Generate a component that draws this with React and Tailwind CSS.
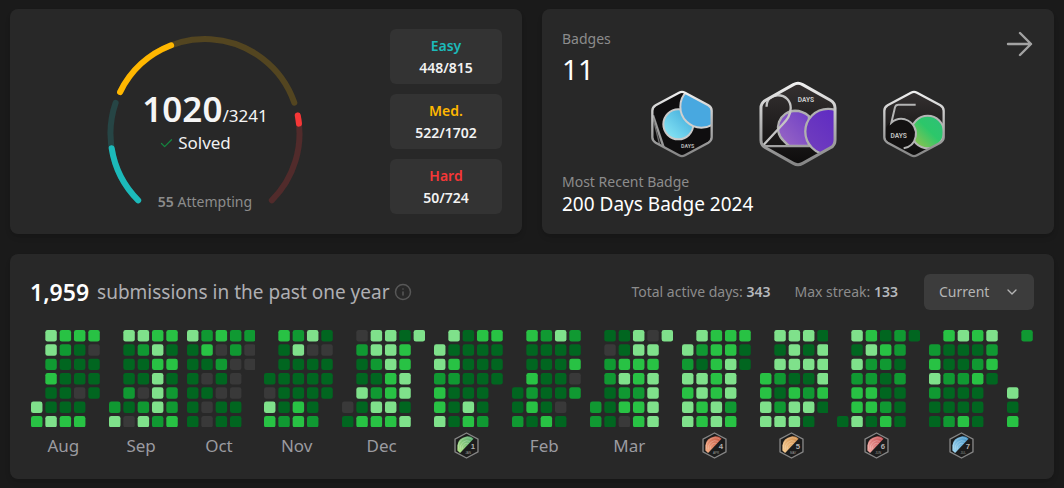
import React, { useId } from 'react';
import { Check, ChevronDown, Info } from 'lucide-react';

const LEVELS = ['#393939', '#016620', '#109932', '#28c244', '#7fe18b'];

// One string per weekday, one character per week. A dot is a day outside the month.
const MONTHS = [
  { label: 'Aug', rows: ['.4333', '.4210', '.2111', '.3111', '.1101', '4111.', '3433.'] },
  { label: 'Sep', rows: ['.4433', '.1241', '.1133', '.1141', '.2042', '21242', '40423'] },
  { label: 'Oct', rows: ['42322', '13020', '11200', '1010.', '1100.', '1011.', '1011.'] },
  { label: 'Nov', rows: ['.3241', '.1400', '.1111', '11111', '01111', '4131.', '3232.'] },
  { label: 'Dec', rows: ['.04414', '.2443.', '.1243.', '.1134.', '.4234.', '01441.', '13334.'] },
  { label: 'Jan', badge: { number: 1, from: '#b9e88a', to: '#4fa66a' }, rows: ['.4133', '41111', '43111', '22111', '3111.', '3141.', '4132.'] },
  { label: 'Feb', rows: ['.3242', '.1111', '.1113', '.3110', '12112', '1310.', '2131.'] },
  { label: 'Mar', rows: ['.11404', '.0144.', '.2333.', '.2434.', '.1224.', '21334.', '21034.'] },
  { label: 'Apr', badge: { number: 4, from: '#f7b48a', to: '#c4503c' }, rows: ['.4333', '42331', '21341', '4434.', '3434.', '4342.', '4343.'] },
  { label: 'May', badge: { number: 5, from: '#f9cf95', to: '#d08a45' }, rows: ['.4441', '.1414', '.4444', '32114', '31323', '42441', '4441.'] },
  { label: 'Jun', badge: { number: 6, from: '#f5b0a8', to: '#c2494d' }, rows: ['.43121', '.1432.', '.4221.', '.2212.', '.3311.', '.3321.', '14131.'] },
  { label: 'Jul', badge: { number: 7, from: '#a5dcf5', to: '#3d8fc4' }, rows: ['.3434', '21112', '31123', '42231', '2111.', '1111.', '1231.'] },
  { label: '', rows: ['.2', '..', '..', '..', '4.', '1.', '3.'] },
];

const DIFFICULTIES = [
  { name: 'Easy', solved: 448, total: 815, color: 'text-[#1cbaba]' },
  { name: 'Med.', solved: 522, total: 1702, color: 'text-[#ffb700]' },
  { name: 'Hard', solved: 50, total: 724, color: 'text-[#f63737]' },
];

// Angles are in degrees clockwise from the top.
const ARCS = [
  { from: -135, to: -71, color: '#264545' },
  { from: -135, to: -99, color: '#1cbaba' },
  { from: -64, to: 71, color: '#534520' },
  { from: -64, to: -21, color: '#ffb700' },
  { from: 79, to: 135, color: '#512b2b' },
  { from: 79, to: 84, color: '#f63737' },
];

const arcPath = (from, to) => {
  const point = (deg) => {
    const rad = (deg * Math.PI) / 180;
    return `${100 + 94.5 * Math.sin(rad)} ${104.5 - 94.5 * Math.cos(rad)}`;
  };
  return `M${point(from)} A94.5 94.5 0 ${to - from > 180 ? 1 : 0} 1 ${point(to)}`;
};

const SMALL_HEX =
  'M84 8 Q93 3 102 8 L172 46 Q182 52 182 62 V142 Q182 152 172 158 L102 196 Q93 201 84 196 L14 158 Q4 152 4 142 V62 Q4 52 14 46 Z';
const LARGE_HEX =
  'M103 11 Q117 3 131 11 L215 58 Q229 66 229 82 V178 Q229 194 215 202 L131 249 Q117 257 103 249 L19 202 Q5 194 5 178 V82 Q5 66 19 58 Z';

const BadgeDefs = ({ id, hex }) => (
  <defs>
    <linearGradient id={`${id}-rim`} x1="0" y1="0" x2="0" y2="1">
      <stop offset="0" stopColor="#f0f0f0" />
      <stop offset="0.5" stopColor="#b4b4b4" />
      <stop offset="1" stopColor="#858585" />
    </linearGradient>
    <linearGradient id={`${id}-body`} x1="0" y1="0" x2="0" y2="1">
      <stop offset="0" stopColor="#353131" />
      <stop offset="1" stopColor="#0d0c0c" />
    </linearGradient>
    <clipPath id={`${id}-clip`}>
      <path d={hex} />
    </clipPath>
  </defs>
);

const HundredDaysBadge = () => {
  const id = useId();
  return (
    <svg viewBox="0 0 186 204" className="w-[62px] h-[68px]" role="img" aria-label="100 Days Badge">
      <BadgeDefs id={id} hex={SMALL_HEX} />
      <linearGradient id={`${id}-a`} x1="0" y1="1" x2="1" y2="0">
        <stop offset="0" stopColor="#8fecf8" />
        <stop offset="1" stopColor="#3aa5d8" />
      </linearGradient>
      <path d={SMALL_HEX} fill="#0f0e0f" />
      <g clipPath={`url(#${id}-clip)`}>
        <path d="M6 76 L42 184 L26 174 Z" fill="#1d1b1c" />
        <path d="M6 76 L42 184" stroke="#9a9a9a" strokeWidth="7" />
        <path d="M6 84 L28 172" stroke="#6d6d6d" strokeWidth="4" />
        <circle cx="82" cy="103" r="45" fill={`url(#${id}-a)`} stroke="#c9c9c9" strokeWidth="6" />
        <circle cx="151" cy="50" r="63" fill="#48a8e0" stroke="#cfcfcf" strokeWidth="6" />
      </g>
      <path d={SMALL_HEX} fill="none" stroke={`url(#${id}-rim)`} strokeWidth="7" />
      <text x="110" y="173" textAnchor="middle" fontSize="16" fontWeight="700" fontFamily="Roboto, 'Liberation Sans', sans-serif" fill="#b5b5b5">DAYS</text>
    </svg>
  );
};

const TwoHundredDaysBadge = () => {
  const id = useId();
  return (
    <svg viewBox="0 0 234 260" className="w-[78px] h-[86px]" role="img" aria-label="200 Days Badge 2024">
      <BadgeDefs id={id} hex={LARGE_HEX} />
      <linearGradient id={`${id}-a`} x1="0" y1="1" x2="1" y2="0">
        <stop offset="0" stopColor="#9a68c4" />
        <stop offset="1" stopColor="#6f3fc6" />
      </linearGradient>
      <linearGradient id={`${id}-b`} x1="0" y1="1" x2="1" y2="0">
        <stop offset="0" stopColor="#7340bd" />
        <stop offset="1" stopColor="#5a26c4" />
      </linearGradient>
      <path d={LARGE_HEX} fill={`url(#${id}-body)`} />
      <g clipPath={`url(#${id}-clip)`} fill="none" strokeWidth="7">
        <path d="M108 90 A52 52 0 0 0 74 181 Q82 190 90 196 H150 V106 Q130 90 108 90 Z" fill={`url(#${id}-a)`} stroke="#b0b0b0" />
        <path d="M22 78 C22 56 36 43 56 43 C80 43 95 60 95 82 C95 104 84 116 68 134 L12 194" stroke="#c4c4c4" />
        <path d="M10 197 H160" stroke="#a0a0a0" />
        <circle cx="208" cy="153" r="69" fill={`url(#${id}-b)`} stroke="#b0b0b0" />
      </g>
      <path d={LARGE_HEX} fill="none" stroke={`url(#${id}-rim)`} strokeWidth="9" />
      <text x="141" y="63" textAnchor="middle" fontSize="20" fontWeight="700" fontFamily="Roboto, 'Liberation Sans', sans-serif" fill="#c9c9c9">DAYS</text>
    </svg>
  );
};

const FiftyDaysBadge = () => {
  const id = useId();
  return (
    <svg viewBox="0 0 186 204" className="w-[62px] h-[68px]" role="img" aria-label="50 Days Badge">
      <BadgeDefs id={id} hex={SMALL_HEX} />
      <linearGradient id={`${id}-a`} x1="0" y1="1" x2="1" y2="0">
        <stop offset="0.1" stopColor="#8fc34f" />
        <stop offset="0.55" stopColor="#2cc76a" />
        <stop offset="1" stopColor="#2fbf78" />
      </linearGradient>
      <path d={SMALL_HEX} fill={`url(#${id}-body)`} />
      <g clipPath={`url(#${id}-clip)`}>
        <circle cx="134" cy="126" r="49" fill={`url(#${id}-a)`} stroke="#b5b5b5" strokeWidth="6" />
        <circle cx="52" cy="133" r="47" fill="#131111" />
        <path d="M98 44 H46 Q38 44 36 52 L25 98 Q44 82 66 88 C92 96 102 120 98 140 Q92 170 62 175" fill="none" stroke="#b4b4b4" strokeWidth="6" />
      </g>
      <path d={SMALL_HEX} fill="none" stroke={`url(#${id}-rim)`} strokeWidth="7" />
      <text x="47" y="143" textAnchor="middle" fontSize="20" fontWeight="700" fontFamily="Roboto, 'Liberation Sans', sans-serif" fill="#bdbdbd">DAYS</text>
    </svg>
  );
};

const MonthBadge = ({ number, from, to, label }) => {
  const id = useId();
  return (
    <svg viewBox="0 0 74 80" className="w-[25px] h-[27px]" role="img" aria-label={`${label} badge`}>
      <linearGradient id={id} x1="0" y1="1" x2="1" y2="0">
        <stop offset="0" stopColor={from} />
        <stop offset="1" stopColor={to} />
      </linearGradient>
      <path d="M37 3 L71 21 V59 L37 77 L3 59 V21 Z" fill="#1c1c1c" stroke="#858585" strokeWidth="4" strokeLinejoin="round" />
      <path d="M58 20 L18 62 L10 55 V40 Q12 18 37 13 Q50 12 58 20 Z" fill={`url(#${id})`} />
      <g fill="none" stroke="#ffffff" strokeOpacity="0.35" strokeWidth="2">
        <path d="M14 50 A26 26 0 0 1 54 22" />
        <path d="M20 52 A20 20 0 0 1 48 28" />
        <path d="M25 50 A14 14 0 0 1 43 34" />
      </g>
      <text x="56" y="49" textAnchor="middle" fontSize="23" fontWeight="700" fontFamily="'Liberation Sans', sans-serif" fill="#b0b0b0">{number}</text>
      <text x="42" y="65" textAnchor="middle" fontSize="9" fontFamily="'Liberation Sans', sans-serif" fill="#9a9a9a">{label.toUpperCase()}</text>
    </svg>
  );
};

const Month = ({ month }) => {
  const weeks = month.rows[0].length;
  const width = weeks * 5 - 1;
  return (
    <div className="flex flex-col min-w-0 basis-0" style={{ flexGrow: width }}>
      <svg viewBox={`0 0 ${width} 34`} className="w-full block">
        {month.rows.map((row, y) =>
          row.split('').map((level, x) =>
            level === '.' ? null : (
              <rect key={`${x}-${y}`} x={x * 5} y={y * 5} width="4" height="4" rx="0.8" fill={LEVELS[level]} />
            )
          )
        )}
      </svg>
      <div className="mt-1 pr-1 h-7 flex items-center justify-center text-[17px] text-[#9b9ba0]">
        {month.badge ? <MonthBadge {...month.badge} label={month.label} /> : month.label}
      </div>
    </div>
  );
};

const SolvedCard = () => (
  <section className="bg-[#282828] rounded-lg shadow-md p-5 flex gap-2.5">
    <div className="flex-1 grid justify-items-center">
      <svg viewBox="0 0 200 185" className="col-start-1 row-start-1 w-[200px] h-[185px]">
        {ARCS.map((arc, index) => (
          <path key={index} d={arcPath(arc.from, arc.to)} fill="none" stroke={arc.color} strokeWidth="6" strokeLinecap="round" />
        ))}
      </svg>
      <div className="col-start-1 row-start-1 flex flex-col items-center pt-[58px]">
        <div className="flex items-baseline text-[#f5f5f5]">
          <span className="text-[35px] leading-11 font-semibold">1020</span>
          <span className="text-[17px]">/3241</span>
        </div>
        <div className="mr-5 flex items-center gap-1 text-[17px] leading-6 text-[#f0f0f0]">
          <Check size={15} strokeWidth={2} className="text-[#15853f]" />
          Solved
        </div>
        <div className="mt-auto pb-0.5 text-sm leading-5 text-[#8c8c8c]">
          <span className="font-semibold">55</span> Attempting
        </div>
      </div>
    </div>
    <div className="w-28 flex flex-col gap-2.5">
      {DIFFICULTIES.map((item) => (
        <div key={item.name} className="flex-1 bg-[#333333] rounded-md flex flex-col items-center justify-center text-sm font-semibold">
          <span className={`leading-[22px] ${item.color}`}>{item.name}</span>
          <span className="leading-[22px] text-[#f2f2f2]">
            {item.solved}/{item.total}
          </span>
        </div>
      ))}
    </div>
  </section>
);

const BadgesCard = () => (
  <section className="bg-[#282828] rounded-lg shadow-md p-5 flex flex-col">
    <div className="flex justify-between items-start">
      <div>
        <h2 className="text-sm leading-5 text-[#8c8c8c]">Badges</h2>
        <p className="text-[28px] leading-10 text-white">11</p>
      </div>
      <a href="#badges" aria-label="All badges" className="text-[#a3a3a3]">
        <svg viewBox="0 0 28 28" className="w-7 h-7" fill="none" stroke="currentColor" strokeWidth="2.4" strokeLinecap="round" strokeLinejoin="round">
          <path d="M2 15 H25 M14 4 L25 15 L14 26" />
        </svg>
      </a>
    </div>
    <div className="-mt-2 flex items-center justify-center gap-[46px]">
      <HundredDaysBadge />
      <TwoHundredDaysBadge />
      <FiftyDaysBadge />
    </div>
    <div className="mt-auto">
      <h3 className="text-sm leading-6 text-[#8c8c8c]">Most Recent Badge</h3>
      <p className="text-[19px] leading-5 text-white">200 Days Badge 2024</p>
    </div>
  </section>
);

const SubmissionsCard = () => (
  <section className="bg-[#282828] rounded-lg shadow-md p-5">
    <div className="flex items-center">
      <h2 className="flex items-center text-[19px] text-[#afafb3]">
        <span className="mr-2 text-[23px] leading-9 font-semibold text-white">1,959</span>
        submissions in the past one year
        <Info size={18} strokeWidth={2} className="ml-1 text-[#575757]" />
      </h2>
      <p className="ml-auto text-sm text-[#8c8c8c]">
        Total active days: <span className="font-semibold text-[#b5b8bc]">343</span>
      </p>
      <p className="ml-6 text-sm text-[#8c8c8c]">
        Max streak: <span className="font-semibold text-[#b5b8bc]">133</span>
      </p>
      <div className="relative ml-[26px]">
        <select
          aria-label="Year"
          defaultValue="current"
          className="block appearance-none w-[110px] h-9 pl-[15px] pr-8 rounded-md bg-[#3c3c3c] text-sm text-[#b5b5b5] outline-none"
        >
          <option value="current">Current</option>
          <option value="2023">2023</option>
          <option value="2022">2022</option>
        </select>
        <ChevronDown size={16} className="absolute right-3.5 top-2.5 text-[#b5b5b5] pointer-events-none" />
      </div>
    </div>
    <div className="mt-5 px-px flex gap-[9px]">
      {MONTHS.map((month, index) => (
        <Month key={index} month={month} />
      ))}
    </div>
  </section>
);

const App = () => {
  return (
    <div className="min-h-screen bg-[#1a1a1a] px-2.5 py-[9px] flex flex-col gap-5 font-['Noto_Sans','Open_Sans',sans-serif]">
      <div className="grid grid-cols-2 gap-5">
        <SolvedCard />
        <BadgesCard />
      </div>
      <SubmissionsCard />
    </div>
  );
};

export default App;
